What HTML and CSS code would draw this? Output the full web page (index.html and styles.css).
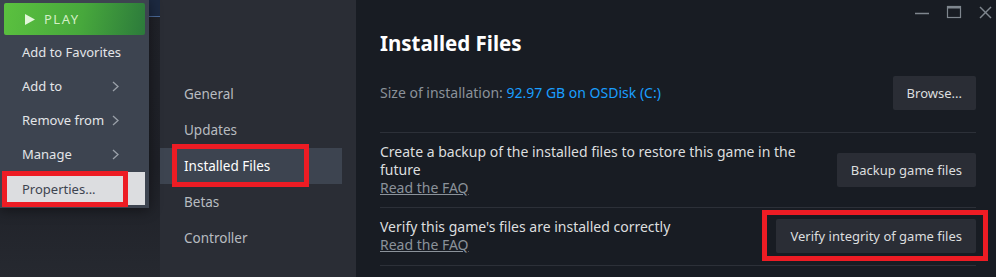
FILE: index.html
```html
<!DOCTYPE html>
<html>
<head>
<meta charset="utf-8">
<link rel="stylesheet" href="styles.css">
</head>
<body>
<div class="app">
  <div class="backdrop"><div class="backdrop-bar"></div></div>
  <nav class="sidebar">
    <div class="nav-item">General</div>
    <div class="nav-item">Updates</div>
    <div class="nav-item active"><span class="mark mark-nav">Installed Files</span></div>
    <div class="nav-item">Betas</div>
    <div class="nav-item">Controller</div>
  </nav>
  <main class="main">
    <div class="titlebar">
      <svg width="80" height="24" viewBox="0 0 80 24" fill="none" stroke="#7f868e">
        <line x1="3" y1="13.5" x2="17" y2="13.5" stroke-width="1.5"/>
        <rect x="35.5" y="6.5" width="13" height="11" stroke-width="1.2"/>
        <line x1="35" y1="7.5" x2="49" y2="7.5" stroke-width="2"/>
        <line x1="68" y1="7" x2="79" y2="18" stroke-width="1.4"/>
        <line x1="79" y1="7" x2="68" y2="18" stroke-width="1.4"/>
      </svg>
    </div>
    <h1 class="title">Installed Files</h1>
    <div class="row row-size">
      <div class="desc">
        <span class="muted">Size of installation:</span> <span class="size">92.97 GB on OSDisk (C:)</span>
      </div>
      <button class="btn">Browse...</button>
    </div>
    <div class="row">
      <div class="desc">
        <div>Create a backup of the installed files to restore this game in the future</div>
        <a class="faq">Read the FAQ</a>
      </div>
      <button class="btn">Backup game files</button>
    </div>
    <div class="row row-last">
      <div class="desc">
        <div>Verify this game's files are installed correctly</div>
        <a class="faq">Read the FAQ</a>
      </div>
      <button class="btn mark mark-verify">Verify integrity of game files</button>
    </div>
  </main>
  <div class="menu">
    <div class="play">
      <svg width="10" height="11" viewBox="0 0 10 11"><polygon points="0,0 10,5.5 0,11" fill="#e3f6da"/></svg>
      <span>PLAY</span>
    </div>
    <div class="menu-item">Add to Favorites</div>
    <div class="menu-item">Add to <svg class="chev" width="7" height="11" viewBox="0 0 7 11"><polyline points="1,1 6,5.5 1,10" fill="none" stroke="#9aa0a8" stroke-width="1.3"/></svg></div>
    <div class="menu-item">Remove from <svg class="chev" width="7" height="11" viewBox="0 0 7 11"><polyline points="1,1 6,5.5 1,10" fill="none" stroke="#9aa0a8" stroke-width="1.3"/></svg></div>
    <div class="menu-item">Manage <svg class="chev" width="7" height="11" viewBox="0 0 7 11"><polyline points="1,1 6,5.5 1,10" fill="none" stroke="#9aa0a8" stroke-width="1.3"/></svg></div>
    <div class="menu-item selected mark mark-props">Properties...</div>
  </div>
</div>
</body>
</html>
```

FILE: styles.css
```css
*, *::before, *::after { box-sizing: border-box; }
html, body { margin: 0; padding: 0; }
body {
  width: 996px;
  height: 277px;
  overflow: hidden;
  font-family: "Noto Sans", "Open Sans", Arial, sans-serif;
  font-size: 14px;
  background: #181c23;
}
.app {
  position: relative;
  display: flex;
  height: 277px;
}
.backdrop {
  width: 160px;
  flex: none;
  background: linear-gradient(to bottom, #202229 0%, #1e2027 60%, #262930 100%);
  display: flex;
  justify-content: flex-end;
}
.backdrop-bar {
  width: 14px;
  height: 17px;
  background: #1c2940;
  border-bottom: 1px solid #4a6896;
}
.sidebar {
  width: 196px;
  flex: none;
  background: #2a2d35;
  padding-top: 76px;
}
.nav-item {
  height: 36px;
  line-height: 36px;
  padding-left: 24px;
  margin-right: 14px;
  color: #b8bcc0;
  font-size: 13.5px;
}
.nav-item.active {
  background: #3d4450;
  color: #ffffff;
}
.mark { position: relative; }
.mark::after {
  content: "";
  position: absolute;
  border: 5px solid #ed1c24;
  pointer-events: none;
}
.mark-nav {
  display: inline-block;
  height: 36px;
}
.mark-nav::after {
  left: -12px;
  top: -4px;
  width: 137px;
  height: 43px;
}
.main {
  flex: 1;
  padding: 0 20px 0 24px;
  color: #dcdedf;
}
.titlebar {
  height: 24px;
  margin-right: -16px;
  display: flex;
  justify-content: flex-end;
}
.title {
  margin: 5px 0 0;
  font-size: 20.5px;
  line-height: 28px;
  font-weight: bold;
  color: #ffffff;
}
.row {
  display: flex;
  align-items: center;
  justify-content: space-between;
  gap: 20px;
  padding: 10px 0;
  border-bottom: 1px solid #2c3038;
  line-height: 18px;
}
.row-size {
  margin-top: 9px;
  padding-bottom: 22px;
}
.row-last { padding-bottom: 11px; }
.desc { max-width: 440px; }
.muted { color: #8b929a; }
.size { color: #1a9fff; }
.faq {
  color: #8b929a;
  text-decoration: underline;
}
.btn {
  flex: none;
  height: 34px;
  padding: 0 14px;
  border: none;
  border-radius: 2px;
  background: #2a2d35;
  color: #dcdedf;
  font-family: "Noto Sans", "Open Sans", Arial, sans-serif;
  font-size: 13px;
}
.mark-verify::after {
  left: -14px;
  top: -9px;
  width: 226px;
  height: 51px;
}
.menu {
  position: absolute;
  left: 0;
  top: 0;
  width: 149px;
  height: 208px;
  background: #3d4450;
  padding: 3px 4px 3px 3px;
  box-shadow: 0 2px 12px rgba(0, 0, 0, 0.45);
}
.play {
  height: 32px;
  margin-left: 1px;
  border-radius: 2px;
  background: linear-gradient(100deg, #5bc13f 0%, #47a83c 55%, #2c7a3b 100%);
  display: flex;
  align-items: center;
  padding-left: 21px;
  gap: 9px;
  color: #d3efc6;
  font-size: 13px;
  letter-spacing: 1.5px;
}
.menu-item {
  position: relative;
  height: 34px;
  display: flex;
  align-items: center;
  padding-left: 19px;
  color: #e3e5e8;
  font-size: 13px;
}
.menu-item .chev {
  position: absolute;
  left: 109px;
}
.selected {
  height: 33px;
  margin-top: 1px;
  background: #dcdde0;
  color: #3d4450;
}
.mark-props::after {
  left: -1px;
  top: -1px;
  width: 126px;
  height: 36px;
}
```
